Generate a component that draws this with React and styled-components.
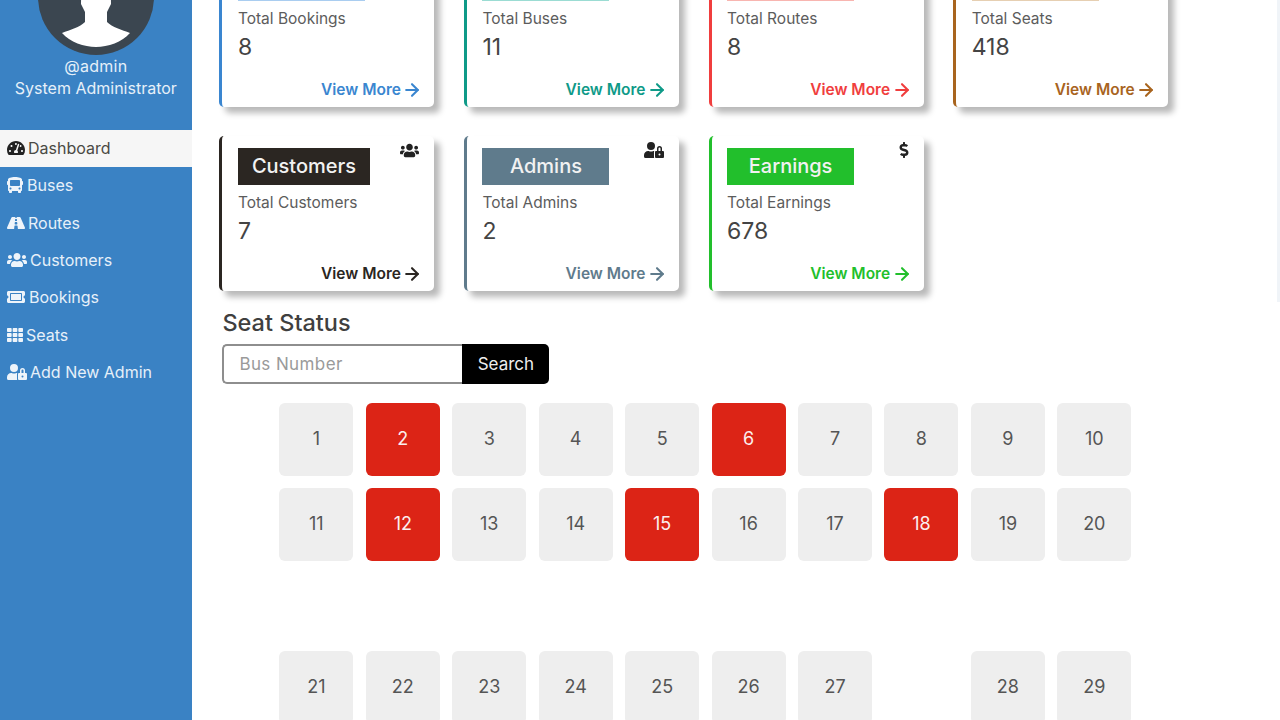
import React from "react";
import styled, { createGlobalStyle } from "styled-components";
import {
  FaTachometerAlt,
  FaBus,
  FaRoad,
  FaUsers,
  FaTicketAlt,
  FaTh,
  FaUserLock,
  FaDollarSign,
} from "react-icons/fa";
import { ArrowRight } from "lucide-react";

const GlobalStyle = createGlobalStyle`
  html, body {
    margin: 0;
    padding: 0;
    height: 720px;
    overflow: hidden;
    background: #fff;
    font-family: "Inter", "Noto Sans", sans-serif;
  }
  * { box-sizing: border-box; }
`;

const Page = styled.div`
  position: relative;
  display: flex;
  width: 1280px;
  height: 720px;
  overflow: hidden;
`;

const ScrollThumb = styled.div`
  position: absolute;
  top: 0;
  right: 0;
  width: 3px;
  height: 302px;
  background: #f0f4f8;
`;

const Sidebar = styled.aside`
  width: 191.7px;
  flex-shrink: 0;
  background: #3a82c4;
  color: #e6f0f9;
  display: flex;
  flex-direction: column;
`;

const Profile = styled.div`
  margin-top: -61px;
  display: flex;
  flex-direction: column;
  align-items: center;
  height: 191px;
  flex-shrink: 0;
`;

const Avatar = styled.svg`
  width: 116px;
  height: 116px;
  display: block;
  flex-shrink: 0;
`;

const Handle = styled.div`
  font-size: 16px;
  letter-spacing: 0.3px;
  line-height: 22px;
`;

const Role = styled.div`
  font-size: 16px;
  line-height: 22px;
`;

const NavItem = styled.a`
  display: flex;
  align-items: center;
  height: 37.3px;
  flex-shrink: 0;
  padding: 0 0 1px 7px;
  gap: ${(p) => p.$gap || 3}px;
  font-size: 16px;
  color: ${(p) => (p.$active ? "#4a4a44" : "#e6f0f9")};
  background: ${(p) => (p.$active ? "#f6f6f6" : "transparent")};

  svg {
    color: ${(p) => (p.$active ? "#222" : "#eef4fa")};
  }
`;

const Main = styled.main`
  flex: 1;
  min-width: 0;
  padding-left: 27.7px;
`;

const CardGrid = styled.div`
  margin-top: -48px;
  display: grid;
  grid-template-columns: repeat(4, 215px);
  column-gap: 29.6px;
  row-gap: 29px;
`;

const Card = styled.div`
  position: relative;
  height: 155px;
  padding: 12px 15px 0 15.5px;
  background: #fff;
  border-left: 3px solid ${(p) => p.$color};
  border-radius: 5px;
  box-shadow: 6px 6px 6px rgba(0, 0, 0, 0.28);
`;

const Badge = styled.div`
  width: fit-content;
  min-width: 127px;
  height: 37px;
  padding: 0 14px 2px;
  background: ${(p) => p.$color};
  color: #f2f2f2;
  font-size: 20px;
  font-weight: 500;
  display: flex;
  align-items: center;
  justify-content: center;
`;

const CornerIcon = styled.span`
  position: absolute;
  top: 4px;
  right: ${(p) => p.$right}px;
  height: 20px;
  display: flex;
  align-items: center;
  color: #222;
`;

const CardLabel = styled.div`
  font-size: 15.5px;
  line-height: 20px;
  margin-top: 8px;
  color: #5c5c5c;
`;

const CardValue = styled.div`
  font-size: 23px;
  line-height: 28px;
  margin-top: 4px;
  color: #444;
`;

const MoreLink = styled.a`
  position: absolute;
  right: 15px;
  bottom: 7px;
  display: flex;
  align-items: center;
  gap: 4px;
  font-size: 15.5px;
  line-height: 20px;
  font-weight: 600;
  color: ${(p) => p.$color};

  svg {
    margin: -4px -3px -4px -2.5px;
  }
`;

const SectionTitle = styled.h2`
  margin: 19px 0 0 3px;
  font-size: 23.5px;
  line-height: 26px;
  font-weight: 500;
  color: #3f3f3f;
`;

const SearchForm = styled.form`
  display: flex;
  margin: 8px 0 0 3px;
  width: 327px;
  height: 40px;
`;

const SearchInput = styled.input`
  width: 240px;
  height: 100%;
  padding: 0 15px;
  border: 2px solid #8e8e8e;
  border-right: none;
  border-radius: 5px 0 0 5px;
  font: inherit;
  font-size: 17px;
  letter-spacing: 0.4px;
  color: #444;
  outline: none;

  &::placeholder {
    color: #9a9a9a;
  }
`;

const SearchButton = styled.button`
  flex: 1;
  border: none;
  border-radius: 0 5px 5px 0;
  background: #000;
  color: #eee;
  font: inherit;
  font-size: 17px;
`;

const SeatGrid = styled.div`
  margin: 19px 0 0 60px;
  display: grid;
  grid-template-columns: repeat(10, 74px);
  grid-template-rows: 73px 73px 66px 73px;
  column-gap: 12.45px;
  row-gap: 12px;
`;

const Seat = styled.div`
  display: flex;
  align-items: center;
  justify-content: center;
  padding-bottom: 2px;
  border-radius: 6px;
  font-size: 18px;
  background: ${(p) => (p.$booked ? "#dc2416" : "#eeeeee")};
  color: ${(p) => (p.$booked ? "#fbeeee" : "#555")};
`;

const Aisle = styled.div`
  grid-column: 1 / -1;
`;

const SeatGap = styled.div``;

const navItems = [
  { label: "Dashboard", Icon: FaTachometerAlt, size: 18, active: true },
  { label: "Buses", Icon: FaBus, size: 16, gap: 4 },
  { label: "Routes", Icon: FaRoad, size: 18 },
  { label: "Customers", Icon: FaUsers, size: 20 },
  { label: "Bookings", Icon: FaTicketAlt, size: 18, gap: 4 },
  { label: "Seats", Icon: FaTh, size: 16 },
  { label: "Add New Admin", Icon: FaUserLock, size: 20 },
];

const cards = [
  { title: "Bookings", label: "Total Bookings", value: "8", color: "#3a86d0", tint: "#a9cdf0" },
  { title: "Buses", label: "Total Buses", value: "11", color: "#0f9a88", tint: "#9bdcd3" },
  { title: "Routes", label: "Total Routes", value: "8", color: "#f03e3e", tint: "#f8b5b0" },
  { title: "Seats", label: "Total Seats", value: "418", color: "#a8641e", tint: "#e6cfb2" },
  { title: "Customers", label: "Total Customers", value: "7", color: "#2b2622", Icon: FaUsers, size: 19, right: 15 },
  { title: "Admins", label: "Total Admins", value: "2", color: "#5f7b8c", Icon: FaUserLock, size: 20, right: 15 },
  { title: "Earnings", label: "Total Earnings", value: "678", color: "#22bf2c", Icon: FaDollarSign, size: 16, right: 12 },
];

const booked = [2, 6, 12, 15, 18];

const renderSeat = (n) => (
  <Seat key={n} $booked={booked.includes(n)}>
    {n}
  </Seat>
);

const range = (from, to) => Array.from({ length: to - from + 1 }, (_, i) => from + i);

export default function App() {
  return (
    <Page>
      <GlobalStyle />
      <Sidebar>
        <Profile>
          <Avatar viewBox="0 0 116 116">
            <circle cx="58" cy="58" r="58" fill="#3b4650" />
            <path d="M24 94 C32 91 42 88 47 83 L47 73 L43 65 C43 40 50 14 58 14 C66 14 73 40 73 65 L69 73 L69 83 C74 88 84 91 92 94 C84 103 70 108 58 108 C46 108 32 103 24 94 Z" fill="#fff" />
          </Avatar>
          <Handle>@admin</Handle>
          <Role>System Administrator</Role>
        </Profile>
        {navItems.map(({ label, Icon, size, active, gap }) => (
          <NavItem key={label} $active={active} $gap={gap}>
            <Icon size={size} />
            {label}
          </NavItem>
        ))}
      </Sidebar>
      <Main>
        <CardGrid>
          {cards.map((c) => (
            <Card key={c.title} $color={c.color}>
              <Badge $color={c.tint || c.color}>{c.title}</Badge>
              {c.Icon && (
                <CornerIcon $right={c.right}>
                  <c.Icon size={c.size} />
                </CornerIcon>
              )}
              <CardLabel>{c.label}</CardLabel>
              <CardValue>{c.value}</CardValue>
              <MoreLink $color={c.color}>
                View More <ArrowRight size={20} strokeWidth={2.5} />
              </MoreLink>
            </Card>
          ))}
        </CardGrid>
        <SectionTitle>Seat Status</SectionTitle>
        <SearchForm onSubmit={(e) => e.preventDefault()}>
          <SearchInput placeholder="Bus Number" />
          <SearchButton type="submit">Search</SearchButton>
        </SearchForm>
        <SeatGrid>
          {range(1, 20).map(renderSeat)}
          <Aisle />
          {range(21, 27).map(renderSeat)}
          <SeatGap />
          {range(28, 29).map(renderSeat)}
        </SeatGrid>
      </Main>
      <ScrollThumb />
    </Page>
  );
}
